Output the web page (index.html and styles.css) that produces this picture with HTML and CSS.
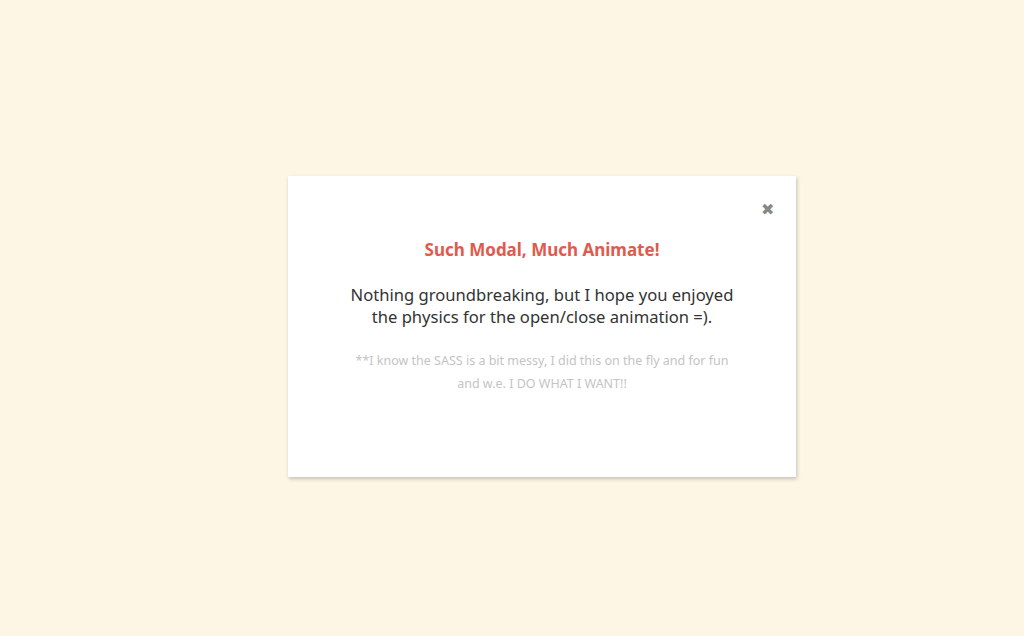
FILE: index.html
```html
<!DOCTYPE html>
<html>
<head>
<meta charset="utf-8">
<link rel="stylesheet" href="styles.css">
</head>
<body>
<div class="page">
  <div class="modal">
    <div class="close-row"><span class="close">&#x2716;</span></div>
    <h2 class="title">Such Modal, Much Animate!</h2>
    <p class="lead">Nothing groundbreaking, but I hope you enjoyed<br>the physics for the open/close animation =).</p>
    <p class="note">**I know the SASS is a bit messy, I did this on the fly and for fun<br>and w.e. I DO WHAT I WANT!!</p>
  </div>
</div>
</body>
</html>
```
FILE: styles.css
```css
html, body {
  margin: 0;
  padding: 0;
  height: 100%;
  background: #fdf6e4;
  font-family: "Noto Sans", "Open Sans", sans-serif;
}
.page {
  padding: 176px 0 0 288px;
}
.modal {
  width: 508px;
  height: 301px;
  box-sizing: border-box;
  background: #fff;
  box-shadow: 1px 2px 4px rgba(0,0,0,0.22);
  padding: 24px 20px 0 20px;
  text-align: center;
}
.close-row {
  display: flex;
  justify-content: flex-end;
  padding-right: 2px;
  height: 18px;
}
.close {
  color: #888;
  font-size: 16px;
  line-height: 18px;
}
.title {
  margin: 21px 0 0;
  font-size: 17px;
  font-weight: 700;
  color: #e05a4d;
  line-height: 22px;
}
.lead {
  margin: 23px 0 0;
  font-size: 16.6px;
  line-height: 22px;
  color: #333;
}
.note {
  margin: 21px 0 0;
  font-size: 12.5px;
  line-height: 23px;
  color: #c4c4c4;
}
```
